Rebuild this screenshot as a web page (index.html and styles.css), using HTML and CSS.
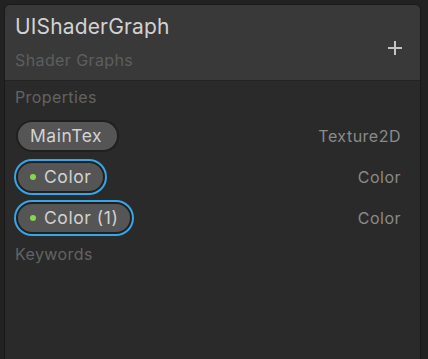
FILE: index.html
```html
<!DOCTYPE html>
<html lang="en">
<head>
    <meta charset="UTF-8">
    <meta name="viewport" content="width=device-width, initial-scale=1.0">
    <title>Blackboard</title>
    <link rel="stylesheet" href="styles.css">
</head>
<body>
    <div class="blackboard">
        <div class="header">
            <div class="titles">
                <div class="title">UIShaderGraph</div>
                <div class="subtitle">Shader Graphs</div>
            </div>
            <div class="add">
                <svg width="14" height="14" viewBox="0 0 14 14">
                    <rect x="6" y="0" width="2" height="14" fill="#c4c4c4"/>
                    <rect x="0" y="6" width="14" height="2" fill="#c4c4c4"/>
                </svg>
            </div>
        </div>

        <div class="content">
            <div class="section-title">Properties</div>
            <div class="props">
                <div class="prop">
                    <span class="pill">MainTex</span>
                    <span class="type">Texture2D</span>
                </div>
                <div class="prop">
                    <span class="pill selected"><span class="dot"></span>Color</span>
                    <span class="type">Color</span>
                </div>
                <div class="prop">
                    <span class="pill selected"><span class="dot"></span>Color (1)</span>
                    <span class="type">Color</span>
                </div>
            </div>
            <div class="section-title">Keywords</div>
        </div>
    </div>
</body>
</html>
```

FILE: styles.css
```css
html, body {
    margin: 0;
    height: 100%;
    overflow: hidden;
    background-color: #222222;
}

body {
    padding: 4px 0 0 4px;
    box-sizing: border-box;
    font-family: Inter, "Noto Sans", sans-serif;
}

.blackboard {
    width: 417px;
    height: 420px;
    box-sizing: border-box;
    border: 1px solid #191919;
    border-radius: 6px 6px 0 0;
    background-color: #2a2a2a;
    overflow: hidden;
}

.header {
    display: flex;
    justify-content: space-between;
    background-color: #393939;
    border-bottom: 1px solid #232323;
    padding: 10px 18px 10px 10px;
}

.title {
    font-size: 21px;
    line-height: 24px;
    color: #d2d2d2;
    letter-spacing: 0.15px;
}

.subtitle {
    margin-top: 11px;
    font-size: 16px;
    line-height: 20px;
    color: #5e5e5e;
    letter-spacing: 0.4px;
}

.add {
    margin-top: 24px;
    height: 14px;
}

.content {
    padding: 6px 19px 0 10px;
}

.section-title {
    font-size: 16px;
    line-height: 20px;
    color: #636363;
    letter-spacing: 0.4px;
}

.props {
    display: flex;
    flex-direction: column;
    gap: 9px;
    margin: 13px 0 10px 1px;
}

.prop {
    display: flex;
    align-items: center;
    justify-content: space-between;
}

.pill {
    display: flex;
    align-items: center;
    height: 32px;
    box-sizing: border-box;
    padding: 0 15px 2px 12px;
    border: 2px solid #202020;
    border-radius: 16px;
    background-color: #555555;
    color: #d2d2d2;
    font-size: 17.5px;
    letter-spacing: 0.55px;
}

.selected {
    box-shadow: 0 0 0 2px #38a5e6;
    padding-left: 10px;
    padding-right: 12px;
}

.dot {
    width: 6px;
    height: 6px;
    margin: 2px 8px 0 2px;
    border-radius: 50%;
    background-color: #86d84a;
}

.type {
    font-size: 16px;
    color: #8a8a8a;
    letter-spacing: 0.5px;
}
```
